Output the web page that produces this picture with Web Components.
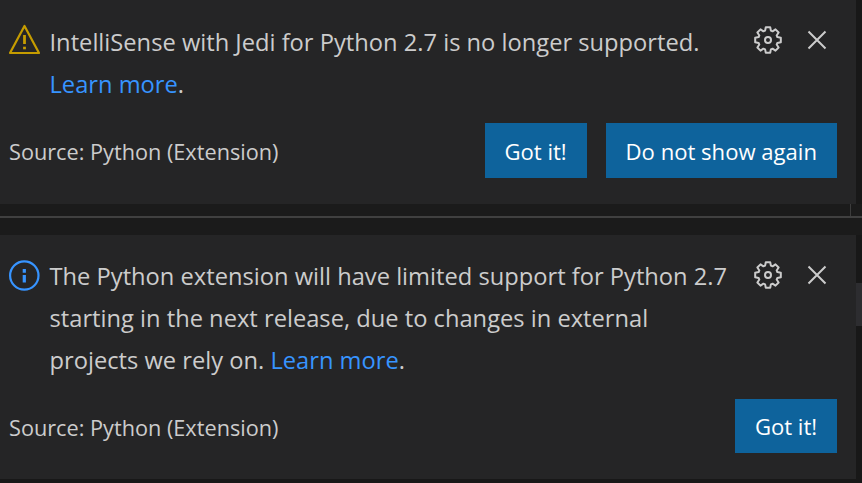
<!DOCTYPE html>
<html>
<head>
<meta charset="utf-8">
<title>Notifications</title>
<style>
  html, body {
    margin: 0;
    height: 100%;
    background: #181818;
    overflow: hidden;
  }
</style>
</head>
<body>
<notification-list>
  <notification-toast icon="warning" pad-top="21" tools-top="-2" source="Source: Python (Extension)">
    IntelliSense with Jedi for Python 2.7 is no longer supported.<br>
    <a>Learn more</a>.
    <toast-button slot="actions" width="102">Got it!</toast-button>
    <toast-button slot="actions">Do not show again</toast-button>
  </notification-toast>
  <panel-divider></panel-divider>
  <notification-toast icon="info" pad-top="20" tools-top="-1" style="--button-height: 54px" source="Source: Python (Extension)">
    The Python extension will have limited support for Python 2.7<br>
    starting in the next release, due to changes in external<br>
    projects we rely on. <a>Learn more</a>.
    <toast-button slot="actions" width="102">Got it!</toast-button>
  </notification-toast>
</notification-list>

<script>
// 8 teeth, each one a trapezoid between the inner and outer radius
function gearPath(cx, cy, outer, inner) {
  const pts = [];
  for (let i = 0; i < 8; i++) {
    const a = (i * Math.PI) / 4 - Math.PI / 2;
    [[inner, -0.3], [outer, -0.17], [outer, 0.17], [inner, 0.3]].forEach(([r, d]) => {
      pts.push((cx + r * Math.cos(a + d)).toFixed(2) + " " + (cy + r * Math.sin(a + d)).toFixed(2));
    });
  }
  return "M" + pts.join(" L") + " Z";
}

const ICONS = {
  warning: `<svg width="32" height="32" viewBox="0 0 32 32" fill="none" style="overflow:visible">
    <path d="M15.5 0 L30 27 H1 Z" stroke="#c59c00" stroke-width="2.2" stroke-linejoin="round"/>
    <path d="M15.5 9 V18" stroke="#c59c00" stroke-width="2.8"/>
    <path d="M15.5 20.7 V23.3" stroke="#c59c00" stroke-width="2.8"/>
  </svg>`,
  info: `<svg width="32" height="32" viewBox="0 0 32 32" fill="none">
    <circle cx="15.3" cy="15.5" r="14.2" stroke="#3794ff" stroke-width="2.2"/>
    <path d="M15.3 9 V12.7 M15.3 15 V22.5" stroke="#3794ff" stroke-width="3.2"/>
  </svg>`,
  gear: `<svg width="28" height="28" viewBox="0 0 28 28" fill="none">
    <path d="${gearPath(14, 14, 13, 9.8)}" stroke="#cccccc" stroke-width="2" stroke-linejoin="round"/>
    <circle cx="14" cy="14" r="3" stroke="#cccccc" stroke-width="2"/>
  </svg>`,
  close: `<svg width="20" height="20" viewBox="0 0 20 20" fill="none">
    <path d="M1.5 1.5 L18.5 18.5 M18.5 1.5 L1.5 18.5" stroke="#cccccc" stroke-width="2"/>
  </svg>`
};

class NotificationList extends HTMLElement {
  constructor() {
    super();
    this.attachShadow({ mode: "open" });
    this.shadowRoot.innerHTML = `
      <style>
        :host {
          display: flex;
          flex-direction: column;
          width: 856px;
          font-family: "Open Sans", "Noto Sans", sans-serif;
        }
        .slider {
          position: absolute;
          left: 856px;
          top: 283px;
          width: 6px;
          height: 43px;
          background: #2d2d30;
        }
      </style>
      <slot></slot>
      <div class="slider"></div>
    `;
  }
}

class PanelDivider extends HTMLElement {
  constructor() {
    super();
    this.attachShadow({ mode: "open" });
    this.shadowRoot.innerHTML = `
      <style>
        :host {
          display: block;
          width: 862px;
          height: 31px;
          background: #1b1b1b;
        }
        .top {
          height: 12px;
          box-sizing: border-box;
          width: 851px;
          border-right: 1px solid #3c3c3c;
        }
        .line {
          height: 2px;
          background: #404040;
        }
      </style>
      <div class="top"></div>
      <div class="line"></div>
    `;
  }
}

class ToastButton extends HTMLElement {
  constructor() {
    super();
    this.attachShadow({ mode: "open" });
    this.shadowRoot.innerHTML = `
      <style>
        :host {
          display: flex;
          align-items: center;
          justify-content: center;
          box-sizing: border-box;
          height: var(--button-height, 55px);
          padding: 0 20px;
          background: #0e639c;
          color: #ffffff;
          font-size: 22.1px;
          white-space: nowrap;
        }
      </style>
      <slot></slot>
    `;
  }

  connectedCallback() {
    if (this.hasAttribute("width")) this.style.width = this.getAttribute("width") + "px";
  }
}

class NotificationToast extends HTMLElement {
  constructor() {
    super();
    this.attachShadow({ mode: "open" });
    this.shadowRoot.innerHTML = `
      <style>
        :host {
          display: block;
          background: #252526;
          color: #cccccc;
          font-size: 23.7px;
          padding: 20px 19px 26px 9px;
        }
        .top {
          display: flex;
          align-items: flex-start;
        }
        .icon {
          flex: none;
          width: 40.5px;
          height: 42px;
          display: flex;
          align-items: center;
        }
        .message {
          flex: 1;
          line-height: 42px;
          white-space: nowrap;
        }
        ::slotted(a) {
          color: #3794ff;
        }
        .tools {
          flex: none;
          display: flex;
          align-items: center;
          gap: 25px;
          height: 42px;
          margin-right: 10px;
        }
        .tools span {
          display: flex;
        }
        .bottom {
          display: flex;
          align-items: center;
          justify-content: space-between;
          margin-top: 18px;
        }
        .source {
          font-size: 21.7px;
          padding-top: 2px;
        }
        .actions {
          display: flex;
          gap: 19px;
        }
      </style>
      <div class="top">
        <div class="icon"></div>
        <div class="message"><slot></slot></div>
        <div class="tools"><span class="gear"></span><span class="close"></span></div>
      </div>
      <div class="bottom">
        <div class="source"></div>
        <div class="actions"><slot name="actions"></slot></div>
      </div>
    `;
  }

  connectedCallback() {
    const root = this.shadowRoot;
    root.querySelector(".icon").innerHTML = ICONS[this.getAttribute("icon")];
    root.querySelector(".gear").innerHTML = ICONS.gear;
    root.querySelector(".close").innerHTML = ICONS.close;
    root.querySelector(".source").textContent = this.getAttribute("source");
    root.querySelector(".tools").style.marginTop = this.getAttribute("tools-top") + "px";
    this.style.paddingTop = this.getAttribute("pad-top") + "px";
  }
}

customElements.define("notification-list", NotificationList);
customElements.define("panel-divider", PanelDivider);
customElements.define("toast-button", ToastButton);
customElements.define("notification-toast", NotificationToast);
</script>
</body>
</html>
